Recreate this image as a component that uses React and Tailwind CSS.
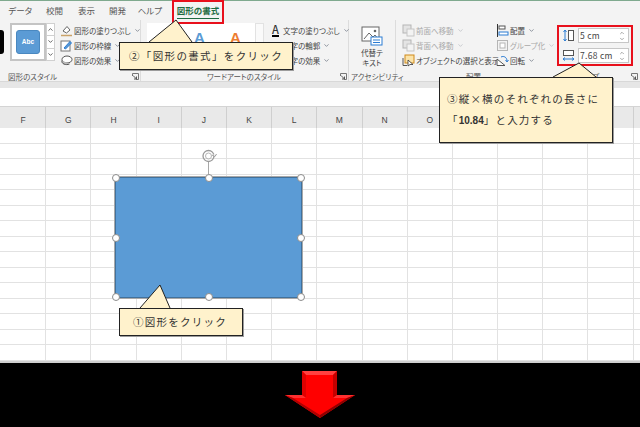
import { ChevronDown, ChevronUp } from 'lucide-react'

const font = { fontFamily: '"Noto Sans CJK JP", "Noto Sans", sans-serif' }
const latin = { fontFamily: '"Liberation Sans", sans-serif' }

const tabs = [
  { label: 'データ', w: 'w-[37px]' },
  { label: '校閲', w: 'w-[31px]' },
  { label: '表示', w: 'w-[32px]' },
  { label: '開発', w: 'w-[31px]' },
  { label: 'ヘルプ', w: 'w-[36px]' },
]
const columns = ['F', 'G', 'H', 'I', 'J', 'K', 'L', 'M', 'N', 'O', 'P', 'Q', 'R', 'S']
const rows = Array.from({ length: 15 })

function Chevron({ className = '' }) {
  return <ChevronDown size={7} strokeWidth={2} className={`shrink-0 text-gray-600 ${className}`} />
}

function Launcher() {
  return (
    <svg width="7" height="7" viewBox="0 0 7 7" className="absolute right-[1px] bottom-[1px]">
      <path d="M.5 3V.5H6.5V6.5H4" fill="none" stroke="#777" />
      <path d="M1 2.5L4.5 6M4.5 3.5V6H2" fill="none" stroke="#555" />
    </svg>
  )
}

function GroupLabel({ children, className = '' }) {
  return <div className={`absolute bottom-0 text-[7.5px] leading-[8px] text-[#555] whitespace-nowrap ${className}`}>{children}</div>
}

function Command({ icon, children, muted, arrow = true }) {
  return (
    <div className={`flex items-center gap-[1px] h-[15px] whitespace-nowrap text-[7.5px] ${muted ? 'text-[#a9a9a9]' : 'text-[#444]'}`}>
      <span className="w-[13px] h-[13px] shrink-0 flex items-center justify-center">{icon}</span>
      <span>{children}</span>
      {arrow && <Chevron className={`ml-[2px] ${muted ? 'opacity-40' : ''}`} />}
    </div>
  )
}

const fillIcon = (
  <svg width="13" height="13" viewBox="0 0 13 13">
    <path d="M3 7L7 2.5L10 6L6.5 9Z" fill="#fff" stroke="#666" />
    <path d="M1 11.5H12" stroke="#c9a36a" strokeWidth="1.5" />
  </svg>
)
const penIcon = (
  <svg width="13" height="13" viewBox="0 0 13 13">
    <rect x="1" y="2" width="9" height="10" fill="#fff" stroke="#777" />
    <path d="M4 9L10 2.5L11.5 4L5.5 10Z" fill="#5b9bd5" stroke="#2b7cd3" />
  </svg>
)
const effectIcon = (
  <svg width="13" height="13" viewBox="0 0 13 13">
    <ellipse cx="7" cy="5.5" rx="5" ry="3.5" fill="#fff" stroke="#555" />
    <path d="M2 6.5C1 10 6 11.5 9.5 10" fill="#bbb" stroke="#555" />
  </svg>
)
const layerIcon = (
  <svg width="13" height="13" viewBox="0 0 13 13">
    <rect x="1" y="1" width="8" height="8" fill="#e4e4e4" stroke="#b5b5b5" />
    <rect x="5" y="5" width="7" height="7" fill="#f3f3f3" stroke="#c5c5c5" />
  </svg>
)
const selectIcon = (
  <svg width="13" height="13" viewBox="0 0 13 13">
    <rect x="3" y="1" width="9" height="8" fill="#fbe3a8" stroke="#d08a1a" />
    <path d="M1 4V11.5H5" fill="none" stroke="#555" />
    <path d="M6 6V12L8 10.5H11Z" fill="#fff" stroke="#333" strokeWidth=".8" />
  </svg>
)
const alignIcon = (
  <svg width="13" height="13" viewBox="0 0 13 13">
    <path d="M1.5 0V13" stroke="#333" />
    <rect x="3" y="2" width="6" height="3" fill="#fff" stroke="#555" />
    <rect x="3" y="8" width="9" height="3" fill="#fff" stroke="#2b7cd3" />
  </svg>
)
const groupIcon = (
  <svg width="13" height="13" viewBox="0 0 13 13">
    <rect x="1.5" y="1.5" width="10" height="10" fill="none" stroke="#b5b5b5" />
    <rect x="4" y="4" width="5" height="5" fill="#fff" stroke="#b5b5b5" />
  </svg>
)
const rotateIcon = (
  <svg width="13" height="13" viewBox="0 0 13 13">
    <path d="M1 11.5H9L1 5Z" fill="#fff" stroke="#555" />
    <path d="M5 3C8 1.5 11 3.5 11 7" fill="none" stroke="#2b7cd3" />
    <path d="M9.5 6L11 8L12.5 6" fill="none" stroke="#2b7cd3" />
  </svg>
)

function Spinner() {
  return (
    <div className="flex flex-col items-center mr-[3px]">
      <ChevronUp size={6} strokeWidth={2} className="text-[#555]" />
      <ChevronDown size={6} strokeWidth={2} className="text-[#555]" />
    </div>
  )
}

function SizeInput({ value, icon }) {
  return (
    <div className="flex items-center gap-[3px] h-[15px]">
      <span className="w-[14px] flex justify-center">{icon}</span>
      <div className="w-[51px] h-[15px] bg-white border border-[#c6c6c6] flex items-center justify-between pl-[1px] text-[8.5px] tracking-[0.3px] text-[#444]">
        {value}
        <Spinner />
      </div>
    </div>
  )
}

// Yellow note with a pointer that sticks out of its top edge
function Callout({ className, tip, tipClass, children }) {
  return (
    <div className={`absolute bg-[#fff2cc] border border-[#222] shadow-[1px_1px_0_#9c9c9c] text-[#333] ${className}`}>
      <svg className={`absolute overflow-visible ${tipClass}`} viewBox={tip.box}>
        <polygon points={tip.points} fill="#fff2cc" />
        <polyline points={tip.points} fill="none" stroke="#222" strokeWidth="1" />
      </svg>
      {children}
    </div>
  )
}

function Handle({ className }) {
  return <span className={`absolute w-[8px] h-[8px] rounded-full bg-white border border-[#8c8c8c] ${className}`} />
}

export default function App() {
  return (
    <div style={font} className="relative w-[640px] h-[427px] overflow-hidden flex flex-col bg-white">
      <div className="h-[1px] bg-[#7fa98e]" />

      {/* tabs */}
      <div className="h-[19px] bg-[#f3f3f3] flex items-center text-[8.5px] text-[#555] [font-feature-settings:'palt']">
        {tabs.map((tab) => (
          <div key={tab.label} className={`${tab.w} h-full flex items-center justify-end pr-[5px]`}>
            <span className="whitespace-nowrap">{tab.label}</span>
          </div>
        ))}
        <div className="ml-[6px] w-[50px] h-full relative flex justify-center items-center font-bold text-[#1e6b41]">
          <span className="whitespace-nowrap">図形の書式</span>
          <span className="absolute left-[4px] right-[4px] bottom-[1px] h-[1.5px] bg-[#1e6b41]" />
        </div>
      </div>

      {/* ribbon */}
      <div className="h-[61px] bg-[#f3f3f3] flex [font-feature-settings:'palt']">
        <div className="relative w-[141px] shrink-0 border-r border-[#dcdcdc]">
          <div className="flex items-start pt-[3px]">
            <div className="w-[4px] h-[24px] mt-[7px] shrink-0 bg-black rounded-r-[3px]" />
            <div className="ml-[6px] w-[36px] h-[38px] shrink-0 border-2 border-[#c4c4c4] bg-white flex items-center justify-center">
              <div style={latin} className="w-[24px] h-[24px] rounded-[3px] bg-[#5b9bd5] border border-[#4a88c0] text-white text-[6.5px] font-bold flex items-center justify-center">Abc</div>
            </div>
            <div className="w-[9px] h-[38px] shrink-0 flex flex-col border border-[#d0d0d0] bg-white">
              <div className="flex-1 flex items-center justify-center border-b border-[#d0d0d0]"><ChevronUp size={7} /></div>
              <div className="flex-1 flex items-center justify-center border-b border-[#d0d0d0]"><ChevronDown size={7} /></div>
              <div className="flex-1 flex items-center justify-center"><ChevronDown size={7} /></div>
            </div>
            <div className="ml-[5px] flex flex-col">
              <Command icon={fillIcon}>図形の塗りつぶし</Command>
              <Command icon={penIcon}>図形の枠線</Command>
              <Command icon={effectIcon}>図形の効果</Command>
            </div>
          </div>
          <GroupLabel className="left-[8px]">図形のスタイル</GroupLabel>
          <Launcher />
        </div>

        <div className="relative w-[208px] shrink-0 border-r border-[#dcdcdc]">
          <div className="flex items-start pt-[3px]">
            <div style={latin} className="ml-[6px] w-[108px] h-[38px] shrink-0 bg-white relative text-[15px] font-bold">
              <span className="absolute left-[47px] top-[4px] text-[#5b9bd5]">A</span>
              <span className="absolute left-[83px] top-[4px] text-[#ed7d31]">A</span>
            </div>
            <div className="w-[9px] h-[38px] shrink-0 bg-[#fafafa] border border-[#e2e2e2]" />
            <div className="ml-[5px] flex flex-col">
              <Command icon={<span className="text-[11px] leading-none border-b-2 border-black font-medium text-[#333]">A</span>}>文字の塗りつぶし</Command>
              <Command icon={<span className="text-[11px] leading-none text-[#666]">A</span>}>文字の輪郭</Command>
              <Command icon={<span className="text-[11px] leading-none text-[#5b9bd5]">A</span>}>文字の効果</Command>
            </div>
          </div>
          <GroupLabel className="left-[66px]">ワードアートのスタイル</GroupLabel>
          <Launcher />
        </div>

        <div className="relative w-[47px] shrink-0 border-r border-[#dcdcdc] flex flex-col items-center pt-[6px]">
          <svg width="22" height="22" viewBox="0 0 22 22">
            <rect x="1" y="1" width="17" height="14" fill="#fff" stroke="#666" />
            <path d="M3 13L8 7L12 11L14 9L17 13" fill="none" stroke="#666" />
            <circle cx="14" cy="5" r="1.3" fill="#666" />
            <rect x="10" y="11" width="11" height="8" fill="#fff" stroke="#2b7cd3" />
            <path d="M12 14H19M12 16.5H19" stroke="#2b7cd3" />
          </svg>
          <div className="text-[7.5px] leading-[10px] text-[#444] text-center">代替テ<br />キスト</div>
          <GroupLabel className="left-[2px]">アクセシビリティ</GroupLabel>
        </div>

        <div className="relative w-[161px] shrink-0 flex pl-[6px] pt-[3px]">
          <div className="flex flex-col w-[94px] shrink-0">
            <Command muted icon={layerIcon}>前面へ移動</Command>
            <Command muted icon={layerIcon}>背面へ移動</Command>
            <Command arrow={false} icon={selectIcon}>オブジェクトの選択と表示</Command>
          </div>
          <div className="flex flex-col">
            <Command icon={alignIcon}>配置</Command>
            <Command muted icon={groupIcon}>グループ化</Command>
            <Command icon={rotateIcon}>回転</Command>
          </div>
          <GroupLabel className="left-[70px]">配置</GroupLabel>
        </div>

        <div className="relative w-[82px] shrink-0">
          <div className="absolute left-0 top-[5px] w-[76px] h-[41px] border-2 border-[#e8101c] flex flex-col justify-center gap-[5px] pl-[2px]">
            <SizeInput
              value="5 cm"
              icon={
                <svg width="13" height="13" viewBox="0 0 13 13">
                  <rect x="6.5" y="1.5" width="5" height="10" fill="#fff" stroke="#555" />
                  <path d="M3 1V12M1.5 3L3 1L4.5 3M1.5 10L3 12L4.5 10" fill="none" stroke="#2b7cd3" />
                </svg>
              }
            />
            <SizeInput
              value="7.68 cm"
              icon={
                <svg width="13" height="13" viewBox="0 0 13 13">
                  <rect x="1.5" y="1.5" width="10" height="5" fill="#fff" stroke="#555" />
                  <path d="M1 10H12M3 8.5L1 10L3 11.5M10 8.5L12 10L10 11.5" fill="none" stroke="#2b7cd3" />
                </svg>
              }
            />
          </div>
          <GroupLabel className="left-[22px]">サイズ</GroupLabel>
          <Launcher />
        </div>
      </div>

      {/* band under the ribbon */}
      <div className="h-[7px] bg-[#e6e6e6] border-t border-[#d8d8d8]" />
      {/* formula bar */}
      <div className="h-[19px] bg-white border-b border-[#d4d4d4]" />

      {/* column headers */}
      <div className="h-[21px] bg-[#e9e9e9] flex">
        <div className="w-[1px]" />
        {columns.map((c) => (
          <div key={c} style={latin} className="w-[45.2px] shrink-0 border-r border-[#cfcfcf] flex items-center justify-center pt-[5px] text-[8.5px] text-[#444]">
            {c}
          </div>
        ))}
      </div>

      {/* sheet */}
      <div className="relative h-[233px] overflow-hidden bg-white">
        <div className="flex flex-col">
          {rows.map((_, i) => (
            <div key={i} className="h-[15.5px] flex border-b border-[#e2e2e2] shrink-0">
              <div className="w-[1px]" />
              {columns.map((c) => (
                <div key={c} className="w-[45.2px] shrink-0 border-r border-[#e2e2e2]" />
              ))}
            </div>
          ))}
        </div>

        {/* selected rectangle */}
        <div className="absolute left-[115px] top-[49px] w-[187px] h-[121px] bg-[#5b9bd5] border border-[#41719c] outline outline-1 outline-[#a8a8a8]">
          <Handle className="-left-[4px] -top-[4px]" />
          <Handle className="left-[89px] -top-[4px]" />
          <Handle className="-right-[4px] -top-[4px]" />
          <Handle className="-left-[4px] top-[56px]" />
          <Handle className="-right-[4px] top-[56px]" />
          <Handle className="-left-[4px] -bottom-[4px]" />
          <Handle className="left-[89px] -bottom-[4px]" />
          <Handle className="-right-[4px] -bottom-[4px]" />
          <span className="absolute left-[92px] -top-[17px] w-[1px] h-[13px] bg-[#a8a8a8]" />
          <svg width="16" height="16" viewBox="0 0 16 16" className="absolute left-[85px] -top-[30px]">
            <circle cx="7.5" cy="8" r="5.5" fill="none" stroke="#9a9a9a" strokeWidth="1.3" />
            <circle cx="7.5" cy="8" r="3" fill="none" stroke="#b5b5b5" />
            <path d="M11 7L14 8.5L15.5 6" fill="#fff" stroke="#9a9a9a" />
          </svg>
        </div>
      </div>

      <div className="h-[2px] bg-[#cfcfcf]" />

      {/* black strip with arrow */}
      <div className="flex-1 bg-black flex justify-center items-start pt-[8px]">
        <svg width="70" height="48" viewBox="0 0 70 48">
          <polygon points="17,0 52,0 52,24 70,24 35,47 0,24 17,24" fill="#f00" />
          <polygon points="17,0 52,0 48,4 21,4" fill="#ff4040" />
          <polygon points="52,0 52,24 48,27 48,4" fill="#c40000" />
          <polygon points="17,0 21,4 21,27 17,24" fill="#e00000" />
          <polygon points="0,24 17,24 21,27 8,27" fill="#ff3030" />
          <polygon points="70,24 52,24 48,27 62,27" fill="#ff3030" />
          <polygon points="0,24 35,47 35,44 8,27" fill="#b00000" />
          <polygon points="70,24 35,47 35,44 62,27" fill="#900000" />
        </svg>
      </div>

      {/* overlays: red highlight on the tab and the notes */}
      <div className="absolute left-[172px] top-0 w-[52px] h-[24px] border-2 border-[#e8101c]" />

      <Callout
        className="left-[119px] top-[42px] w-[174px] h-[28px] flex items-center pl-[9px] text-[10.5px] tracking-[1.35px] whitespace-nowrap"
        tip={{ box: '0 0 44 23', points: '0,22 27,0 43,22' }}
        tipClass="left-[29px] -top-[23px] w-[44px] h-[23px]"
      >
        <span className="relative">②「図形の書式」をクリック</span>
      </Callout>

      <Callout
        className="left-[439px] top-[77px] w-[174px] h-[66px] pl-[7px] pt-[10px] flex flex-col text-[10.5px] tracking-[1.2px] whitespace-nowrap"
        tip={{ box: '0 0 44 15', points: '0,14 26,0 43,14' }}
        tipClass="left-[113px] -top-[15px] w-[44px] h-[15px]"
      >
        <div className="relative h-[21px] leading-[21px]">③縦×横のそれぞれの長さに</div>
        <div className="relative h-[21px] leading-[21px]">
          「<span style={latin} className="font-bold text-[10px] tracking-normal">10.84</span>」と入力する
        </div>
      </Callout>

      <Callout
        className="left-[119px] top-[308px] w-[124px] h-[28px] flex items-center pl-[13px] text-[10.5px] tracking-[1.25px] whitespace-nowrap"
        tip={{ box: '0 0 31 24', points: '0,23 20,0 30,23' }}
        tipClass="left-[20px] -top-[24px] w-[31px] h-[24px]"
      >
        <span className="relative">①図形をクリック</span>
      </Callout>
    </div>
  )
}
